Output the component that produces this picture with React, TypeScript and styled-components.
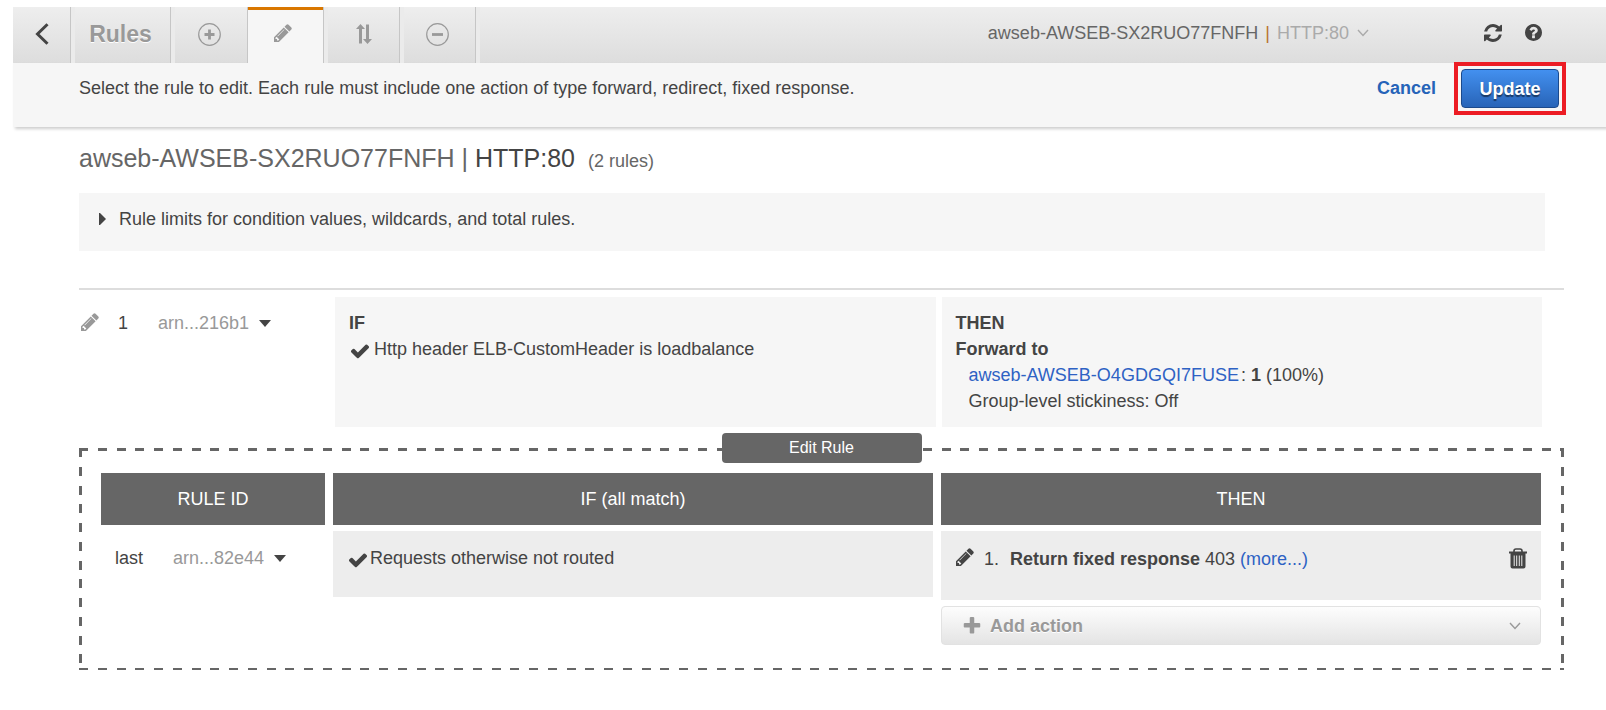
import React from "react";
import styled, { createGlobalStyle, css } from "styled-components";

const GlobalStyle = createGlobalStyle`
  *, *::before, *::after { box-sizing: border-box; }
  body {
    margin: 0;
    background: #fff;
    color: #444;
    font: 18px/26px "Liberation Sans", Arial, Helvetica, sans-serif;
  }
  button { font: inherit; color: inherit; border: 0; padding: 0; background: none; cursor: pointer; }
  svg { display: block; flex: none; }
`;

const Page = styled.div`
  padding: 7px 0 40px 13px;
`;

const TopBar = styled.header`
  display: flex;
  height: 56px;
  background: linear-gradient(#eeeeee, #dddddd);
`;

const Tabs = styled.nav`
  display: flex;
`;

const Tab = styled.button<{ $width: number; $active?: boolean; $first?: boolean }>`
  display: flex;
  align-items: center;
  justify-content: center;
  width: ${(p) => p.$width}px;
  height: 56px;
  padding-bottom: 2px;
  color: #999;
  border-right: 1px solid #c6c6c6;
  ${(p) =>
    !p.$first &&
    css`
      padding-right: 4px;
      border-left: 4px solid #ebebeb;
    `}
  ${(p) =>
    p.$active &&
    css`
      background: #f6f6f6;
      border-left: 0;
      padding: 0 6px 4px 0;
      box-shadow: inset 0 3px #d97700;
    `}
`;

const BarTitle = styled.h1`
  display: flex;
  align-items: center;
  justify-content: center;
  width: 100px;
  margin: 0;
  padding: 0 4px 2px 0;
  font-size: 23px;
  line-height: 26px;
  color: #999;
  text-shadow: 0 1px #fff;
  border-left: 4px solid #ebebeb;
  border-right: 1px solid #c6c6c6;
`;

const BarEnd = styled.div`
  display: flex;
  flex: 1;
  align-items: center;
  justify-content: flex-end;
  padding: 0 64px 4px 0;
  border-left: 4px solid #ebebeb;
`;

const ListenerPicker = styled.button`
  display: flex;
  align-items: center;
  gap: 8px;
  margin-right: 115px;
  color: #aaa;
`;

const BalancerName = styled.span`
  color: #666;
`;

const Divider = styled.span`
  margin: 0 2px;
  color: #b87333;
`;

const IconButton = styled.button<{ $color?: string }>`
  display: flex;
  color: ${(p) => p.$color ?? "#444"};
`;

const BarIcons = styled.div`
  display: flex;
  gap: 23px;
`;

const Notice = styled.section`
  display: flex;
  align-items: flex-start;
  justify-content: space-between;
  height: 64px;
  padding: 6px 47px 0 66px;
  background: #f6f6f6;
  box-shadow: 2px 2px 3px rgba(0, 0, 0, 0.2);
`;

const NoticeText = styled.p`
  margin: 0;
  padding-top: 6px;
`;

const NoticeActions = styled.div`
  display: flex;
  align-items: flex-start;
  gap: 25px;
`;

const Cancel = styled.button`
  && { padding-top: 6px; color: #2563b8; font-weight: bold; }
`;

const Highlight = styled.div`
  outline: 4px solid #ec1c24;
  outline-offset: 3px;
`;

const Update = styled.button`
  && {
    display: block;
    width: 98px;
    height: 39px;
    color: #fff;
    font-weight: bold;
    text-shadow: 0 2px 1px rgba(0, 0, 0, 0.5);
    background: linear-gradient(#4390ef, #2864b8);
    border: 1px solid #1c4a8c;
    border-radius: 4px;
  }
`;

const Main = styled.main`
  padding: 15px 42px 0 66px;
`;

const Heading = styled.h2`
  margin: 0;
  font-size: 25px;
  line-height: 32px;
  font-weight: normal;
  color: #666;
`;

const Protocol = styled.span`
  color: #444;
`;

const RuleCount = styled.small`
  margin-left: 13px;
  font-size: 18px;
`;

const Limits = styled.details`
  margin: 16px 19px 37px 0;
  min-height: 58px;
  background: #f6f6f6;

  summary {
    display: flex;
    align-items: center;
    gap: 13px;
    padding: 13px 19px;
    list-style: none;
    cursor: pointer;
  }
`;

const RuleRow = styled.article`
  display: grid;
  grid-template-columns: 250px 1fr 1fr;
  gap: 6px;
  padding: 7px 22px 0 0;
  border-top: 2px solid #ddd;
`;

const RuleIdentity = styled.div`
  display: flex;
  align-items: flex-start;
  padding: 13px 0 0 2px;

  svg { margin-top: 3px; }
`;

const RuleNumber = styled.span`
  margin: 0 30px 0 19px;
`;

const Arn = styled.button`
  && { display: flex; align-items: center; gap: 10px; color: #999; }
  svg { color: #444; margin: 0; }
`;

const RulePanel = styled.section`
  min-height: 130px;
  padding: 13px 14px;
  background: #f6f6f6;
`;

const PanelLine = styled.div<{ $indent?: boolean; $gap?: number }>`
  display: flex;
  align-items: center;
  gap: ${(p) => p.$gap ?? 5}px;
  padding-left: ${(p) => (p.$indent ? 13 : 0)}px;

  svg { margin: 3px 0 0 2px; }
`;

const Link = styled.a`
  color: #2e62c4;
  text-decoration: none;
`;

const dashes = css`#666 0 9px, transparent 9px 19px, #666 19px 28px, transparent 28px 38px,
  #666 38px 47px, transparent 47px 56px, #666 56px 65px, transparent 65px 75px`;

const Editor = styled.section`
  position: relative;
  margin-top: 21px;
  padding: 25px 23px 25px 22px;
  background-image:
    repeating-linear-gradient(90deg, ${dashes}),
    repeating-linear-gradient(90deg, ${dashes}),
    repeating-linear-gradient(180deg, ${dashes}),
    repeating-linear-gradient(180deg, ${dashes});
  background-repeat: no-repeat;
  background-size: 100% 3px, 100% 2px, 3px 100%, 3px 100%;
  background-position: top, bottom, left, right;
`;

const EditorLabel = styled.h3`
  position: absolute;
  top: -15px;
  left: 50%;
  width: 200px;
  margin: 0 0 0 -100px;
  font-size: 16px;
  line-height: 30px;
  font-weight: normal;
  text-align: center;
  color: #fff;
  background: #666;
  border-radius: 4px;
`;

const RuleTable = styled.table`
  width: 100%;
  table-layout: fixed;
  border-collapse: collapse;

  th, td { padding: 0 0 0 8px; vertical-align: top; text-align: left; font-weight: normal; }
  th:first-child, td:first-child { width: 224px; padding-left: 0; }
`;

const ColumnHead = styled.div`
  margin-bottom: 6px;
  line-height: 52px;
  text-align: center;
  color: #fff;
  background: #666;
`;

const LastRule = styled.div`
  display: flex;
  gap: 30px;
  padding: 14px;
`;

const Condition = styled.div`
  display: flex;
  gap: 3px;
  min-height: 66px;
  padding: 14px 16px;
  background: #ededed;

  svg { margin-top: 6px; }
`;

const Action = styled.div`
  display: flex;
  align-items: flex-start;
  min-height: 69px;
  padding: 15px 14px 15px 15px;
  background: #ededed;

  svg { margin-top: 2px; }
`;

const ActionText = styled.p`
  flex: 1;
  margin: 0 0 0 10px;
`;

const ActionName = styled.b`
  margin-left: 6px;
`;

const AddAction = styled.button`
  && {
    display: flex;
    align-items: center;
    gap: 9px;
    width: 100%;
    height: 39px;
    margin-top: 6px;
    padding: 0 19px 0 21px;
    font-weight: bold;
    color: #999;
    background: linear-gradient(#fdfdfd, #e4e4e4);
    border: 1px solid #e2e2e2;
    border-radius: 4px;
  }
  span { flex: 1; text-align: left; text-shadow: 0 1px #fff; }
`;

const Glyph = ({ d, size }: { d: string; size: number }) => (
  <svg width={size} height={size} viewBox="128 128 1536 1536" fill="currentColor" aria-hidden="true">
    <path d={d} />
  </svg>
);

const PENCIL =
  "M491 1536l91-91-235-235-91 91v107h128v128h107zm523-928q0-22-22-22-10 0-17 7l-542 542q-7 7-7 17 0 22 22 22 10 0 17-7l542-542q7-7 7-17zm-54-192l416 416-832 832h-416v-416zm683 96q0 53-37 90l-166 166-416-416 166-165q36-38 90-38 53 0 91 38l235 234q37 39 37 91z";
const CHECK =
  "M1671 566q0 40-28 68l-724 724-136 136q-28 28-68 28t-68-28l-136-136-362-362q-28-28-28-68t28-68l136-136q28-28 68-28t68 28l294 295 656-657q28-28 68-28t68 28l136 136q28 28 28 68z";
const PLUS =
  "M1600 736v192q0 40-28 68t-68 28h-416v416q0 40-28 68t-68 28h-192q-40 0-68-28t-28-68v-416h-416q-40 0-68-28t-28-68v-192q0-40 28-68t68-28h416v-416q0-40 28-68t68-28h192q40 0 68 28t28 68v416h416q40 0 68 28t28 68z";
const REFRESH =
  "M1639 1056q0 5-1 7-64 268-268 434.5t-478 166.5q-146 0-282.5-55t-243.5-157l-129 129q-19 19-45 19t-45-19-19-45v-448q0-26 19-45t45-19h448q26 0 45 19t19 45-19 45l-137 137q71 66 161 102t187 36q134 0 250-65t186-179q11-17 53-117 8-23 30-23h192q13 0 22.5 9.5t9.5 22.5zm25-800v448q0 26-19 45t-45 19h-448q-26 0-45-19t-19-45 19-45l138-138q-148-137-349-137-134 0-250 65t-186 179q-11 17-53 117-8 23-30 23h-199q-13 0-22.5-9.5t-9.5-22.5v-7q65-268 270-434.5t480-166.5q146 0 284 55.5t245 156.5l130-129q19-19 45-19t45 19 19 45z";
const HELP =
  "M1024 1376v-192q0-14-9-23t-23-9h-192q-14 0-23 9t-9 23v192q0 14 9 23t23 9h192q14 0 23-9t9-23zm256-672q0-88-55.5-163t-138.5-116-170-41q-243 0-371 213-15 24 8 42l132 100q7 6 19 6 16 0 25-12 53-68 86-92 34-24 86-24 48 0 85.5 26t37.5 59q0 38-20 61t-68 45q-63 28-115.5 86.5t-52.5 125.5v36q0 14 9 23t23 9h192q14 0 23-9t9-23q0-19 21.5-49.5t54.5-49.5q32-18 49-28.5t46-35 44.5-48 28-60.5 12.5-81zm384 192q0 209-103 385.5t-279.5 279.5-385.5 103-385.5-103-279.5-279.5-103-385.5 103-385.5 279.5-279.5 385.5-103 385.5 103 279.5 279.5 103 385.5z";

const BackIcon = () => (
  <svg width="14" height="22" viewBox="0 0 14 22" fill="none" stroke="#444" strokeWidth="3">
    <path d="M12.5 1.2 2.5 11l10 9.8" />
  </svg>
);

const CircleIcon = ({ plus }: { plus?: boolean }) => (
  <svg width="23" height="23" viewBox="0 0 23 23" fill="none" stroke="currentColor">
    <circle cx="11.5" cy="11.5" r="10.8" strokeWidth="1.2" />
    <path d={plus ? "M6.5 11.5h10M11.5 6.5v10" : "M6 11.5h11"} strokeWidth="2.8" />
  </svg>
);

const ReorderIcon = () => (
  <svg width="20" height="20" viewBox="-4 0 20 20" fill="currentColor">
    <path d="M4.5 0 9 5H6v14.5H3V5H0z" />
    <path d="M10 .5h3V15h3l-4.5 5L7 15h3z" />
  </svg>
);

const ChevronDown = ({ stroke = "#aaa" }: { stroke?: string }) => (
  <svg width="12" height="8" viewBox="0 0 12 8" fill="none" stroke={stroke} strokeWidth="1.4">
    <path d="M1 1l5 5.5L11 1" />
  </svg>
);

const CaretDown = () => (
  <svg width="12" height="7" viewBox="0 0 12 7" fill="currentColor">
    <path d="M0 0h12L6 7z" />
  </svg>
);

const CaretRight = () => (
  <svg width="8" height="12" viewBox="0 0 8 12" fill="currentColor">
    <path d="M1 0h1l6 6-6 6H1z" />
  </svg>
);

const TrashIcon = () => (
  <svg width="18" height="21" viewBox="0 0 18 21" fill="currentColor">
    <path d="M5 4V3q0-2 2-2h4q2 0 2 2v1" fill="none" stroke="currentColor" strokeWidth="1.6" />
    <path d="M0 3.500h18v2h-1.500v13q0 2-2 2h-11q-2 0-2-2v-13H0z" />
    <path d="M5.200 7.500v10.500M7.700 7.500v10.500M10.300 7.500v10.500M12.800 7.500v10.500" stroke="#ededed" strokeWidth="1" />
  </svg>
);

export default function App() {
  return (
    <>
      <GlobalStyle />
      <Page>
        <TopBar>
          <Tabs aria-label="Rule tools">
            <Tab $width={58} $first aria-label="Back"><BackIcon /></Tab>
            <BarTitle>Rules</BarTitle>
            <Tab $width={77} aria-label="Add rule"><CircleIcon plus /></Tab>
            <Tab $width={76} $active aria-label="Edit rules"><Glyph d={PENCIL} size={18} /></Tab>
            <Tab $width={76} aria-label="Reorder rules"><ReorderIcon /></Tab>
            <Tab $width={76} aria-label="Delete rules"><CircleIcon /></Tab>
          </Tabs>
          <BarEnd>
            <ListenerPicker>
              <span>
                <BalancerName>awseb-AWSEB-SX2RUO77FNFH</BalancerName> <Divider>|</Divider> HTTP:80
              </span>
              <ChevronDown />
            </ListenerPicker>
            <BarIcons>
              <IconButton aria-label="Refresh"><Glyph d={REFRESH} size={18} /></IconButton>
              <IconButton aria-label="Help"><Glyph d={HELP} size={17} /></IconButton>
            </BarIcons>
          </BarEnd>
        </TopBar>

        <Notice>
          <NoticeText>
            Select the rule to edit. Each rule must include one action of type forward, redirect, fixed response.
          </NoticeText>
          <NoticeActions>
            <Cancel>Cancel</Cancel>
            <Highlight>
              <Update>Update</Update>
            </Highlight>
          </NoticeActions>
        </Notice>

        <Main>
          <Heading>
            awseb-AWSEB-SX2RUO77FNFH | <Protocol>HTTP:80</Protocol>
            <RuleCount>(2 rules)</RuleCount>
          </Heading>

          <Limits>
            <summary>
              <CaretRight />
              Rule limits for condition values, wildcards, and total rules.
            </summary>
          </Limits>

          <RuleRow>
            <RuleIdentity>
              <IconButton $color="#999" aria-label="Edit rule 1"><Glyph d={PENCIL} size={18} /></IconButton>
              <RuleNumber>1</RuleNumber>
              <Arn>arn...216b1 <CaretDown /></Arn>
            </RuleIdentity>
            <RulePanel>
              <PanelLine><b>IF</b></PanelLine>
              <PanelLine><Glyph d={CHECK} size={18} />Http header ELB-CustomHeader is loadbalance</PanelLine>
            </RulePanel>
            <RulePanel>
              <PanelLine><b>THEN</b></PanelLine>
              <PanelLine><b>Forward to</b></PanelLine>
              <PanelLine $indent $gap={2}>
                <Link href="#target-group">awseb-AWSEB-O4GDGQI7FUSE</Link>
                <span>: <b>1</b> (100%)</span>
              </PanelLine>
              <PanelLine $indent>Group-level stickiness: Off</PanelLine>
            </RulePanel>
          </RuleRow>

          <Editor>
            <EditorLabel>Edit Rule</EditorLabel>
            <RuleTable>
              <thead>
                <tr>
                  <th scope="col"><ColumnHead>RULE ID</ColumnHead></th>
                  <th scope="col"><ColumnHead>IF (all match)</ColumnHead></th>
                  <th scope="col"><ColumnHead>THEN</ColumnHead></th>
                </tr>
              </thead>
              <tbody>
                <tr>
                  <td>
                    <LastRule>
                      <span>last</span>
                      <Arn>arn...82e44 <CaretDown /></Arn>
                    </LastRule>
                  </td>
                  <td>
                    <Condition><Glyph d={CHECK} size={18} />Requests otherwise not routed</Condition>
                  </td>
                  <td>
                    <Action>
                      <IconButton aria-label="Edit action"><Glyph d={PENCIL} size={18} /></IconButton>
                      <ActionText>
                        1. <ActionName>Return fixed response</ActionName> 403 <Link href="#more">(more...)</Link>
                      </ActionText>
                      <IconButton aria-label="Delete action"><TrashIcon /></IconButton>
                    </Action>
                    <AddAction>
                      <Glyph d={PLUS} size={18} />
                      <span>Add action</span>
                      <ChevronDown stroke="#999" />
                    </AddAction>
                  </td>
                </tr>
              </tbody>
            </RuleTable>
          </Editor>
        </Main>
      </Page>
    </>
  );
}
